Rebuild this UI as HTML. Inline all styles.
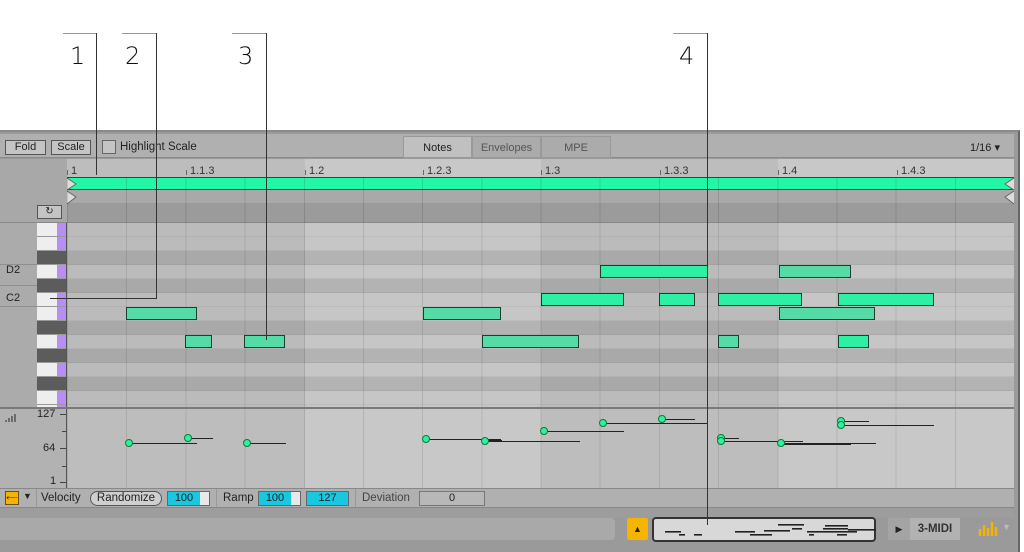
<!DOCTYPE html>
<html><head><meta charset="utf-8"><style>
*{margin:0;padding:0;box-sizing:border-box}
body{width:1024px;height:552px;background:#fff;position:relative;overflow:hidden;font-family:"Liberation Sans",sans-serif;font-size:11px;color:#222}
.a{position:absolute}
.ln{position:absolute;background:#333}
.num{position:absolute;font-size:24px;color:#111;font-family:"DejaVu Sans","Liberation Sans",sans-serif;font-weight:300}
.btn{position:absolute;border:1px solid #555;background:#c4c4c4;font-size:11px;text-align:center;line-height:13px}
.n{position:absolute;height:13px;background:#2ef0a5;border:1px solid #1a3f30}
.nm{background:#55dca6}
.dot{position:absolute;width:8px;height:8px;border-radius:50%;background:#2ef0a5;border:1px solid #173;margin:-4px 0 0 -4px}
.st{position:absolute;height:1px;background:#222}
.rl{position:absolute;top:165px;font-size:11px;color:#333}
.tk{position:absolute;top:170px;width:1px;height:5px;background:#666}
</style></head><body>
<div class="num" style="left:70px;top:42px">1</div>
<div class="num" style="left:125px;top:42px">2</div>
<div class="num" style="left:238px;top:42px">3</div>
<div class="num" style="left:679px;top:42px">4</div>

<div class="a" style="left:0;top:130px;width:1020px;height:422px;background:#9a9a9a;border-right:2px solid #666;border-top:2px solid #8a8a8a"></div>
<div class="a" style="left:0;top:134px;width:1014px;height:24px;background:#b0b0b0;border-bottom:1px solid #8a8a8a"></div>
<div class="btn" style="left:5px;top:140px;width:41px">Fold</div>
<div class="btn" style="left:51px;top:140px;width:40px">Scale</div>
<div class="a" style="left:96px;top:138px;width:1px;height:18px;background:#888"></div>
<div class="a" style="left:102px;top:140px;width:14px;height:14px;border:1px solid #666;background:#c4c4c4"></div>
<div class="a" style="left:120px;top:141px;font-size:11.5px">Highlight Scale</div>
<div class="a" style="left:403px;top:136px;width:69px;height:22px;background:#c0c0c0;border:1px solid #999;text-align:center;line-height:22px">Notes</div>
<div class="a" style="left:472px;top:136px;width:69px;height:22px;background:#ababab;border:1px solid #999;text-align:center;line-height:22px;color:#555">Envelopes</div>
<div class="a" style="left:541px;top:136px;width:70px;height:22px;background:#ababab;border:1px solid #999;text-align:center;line-height:22px;color:#555">MPE</div>
<div class="a" style="left:970px;top:141px;font-size:11px">1/16 ▾</div>

<div class="a" style="left:0;top:159px;width:67px;height:64px;background:#a8a8a8;border-bottom:1px solid #888"></div>
<div class="btn" style="left:37px;top:205px;width:25px;height:14px;font-size:10px;line-height:12px">↻</div>
<div class="a" style="left:67px;top:159px;width:238px;height:18px;background:#bdbdbd"></div>
<div class="a" style="left:305px;top:159px;width:236px;height:18px;background:#c8c8c8"></div>
<div class="a" style="left:541px;top:159px;width:237px;height:18px;background:#bdbdbd"></div>
<div class="a" style="left:778px;top:159px;width:236px;height:18px;background:#c8c8c8"></div>
<div class="rl" style="left:71px">1</div><div class="tk" style="left:67px"></div>
<div class="rl" style="left:190px">1.1.3</div><div class="tk" style="left:186px"></div>
<div class="rl" style="left:309px">1.2</div><div class="tk" style="left:305px"></div>
<div class="rl" style="left:427px">1.2.3</div><div class="tk" style="left:423px"></div>
<div class="rl" style="left:545px">1.3</div><div class="tk" style="left:541px"></div>
<div class="rl" style="left:664px">1.3.3</div><div class="tk" style="left:660px"></div>
<div class="rl" style="left:782px">1.4</div><div class="tk" style="left:778px"></div>
<div class="rl" style="left:901px">1.4.3</div><div class="tk" style="left:897px"></div>
<div class="a" style="left:67px;top:177px;width:947px;height:13px;background:#22f7a5;border:1px solid #2a4a3a"></div>
<div class="a" style="left:67px;top:190px;width:947px;height:14px;background:#a9a9a9;border-bottom:1px solid #999"></div>
<div class="a" style="left:67px;top:204px;width:947px;height:19px;background:#9b9b9b;border-bottom:1px solid #888"></div>
<svg class="a" style="left:66px;top:177px" width="12" height="28"><path d="M1 1 L10 7 L1 13 M1 14 L10 20 L1 27" fill="#ddd" stroke="#666"/></svg>
<svg class="a" style="left:1003px;top:177px" width="12" height="28"><path d="M11 1 L2 7 L11 13 M11 14 L2 20 L11 27" fill="#ddd" stroke="#666"/></svg>
<div class="a" style="left:67px;top:177px;width:947px;height:46px;background:repeating-linear-gradient(90deg,rgba(0,0,0,.12) 0 1px,transparent 1px 59.19px);"></div>

<div class="a" style="left:0;top:223px;width:37px;height:185px;background:#ababab"></div>
<div class="a" style="left:0;top:264px;width:37px;height:1px;background:#8f8f8f"></div>
<div class="a" style="left:0;top:285px;width:37px;height:1px;background:#8f8f8f"></div>
<div class="a" style="left:0;top:306px;width:37px;height:1px;background:#8f8f8f"></div>
<div class="a" style="left:6px;top:264px;font-size:11px">D2</div>
<div class="a" style="left:6px;top:292px;font-size:11px">C2</div>
<div class="a" style="left:37px;top:223px;width:30px;height:185px;background:#eee"></div>
<div class="a" style="left:57px;top:223px;width:9px;height:185px;background:#b68ef5"></div>
<div class="a" style="left:66px;top:223px;width:1px;height:185px;background:#555"></div>
<div class="a" style="left:67px;top:223px;width:947px;height:185px;background:#c6c6c6"></div>
<div class="a" style="left:67px;top:251px;width:947px;height:14px;background:#b3b3b3"></div>
<div class="a" style="left:67px;top:279px;width:947px;height:14px;background:#b3b3b3"></div>
<div class="a" style="left:67px;top:321px;width:947px;height:14px;background:#b3b3b3"></div>
<div class="a" style="left:67px;top:349px;width:947px;height:14px;background:#b3b3b3"></div>
<div class="a" style="left:67px;top:377px;width:947px;height:14px;background:#b3b3b3"></div>
<div class="a" style="left:37px;top:251px;width:29px;height:13px;background:#5c5c5c"></div>
<div class="a" style="left:37px;top:279px;width:29px;height:13px;background:#5c5c5c"></div>
<div class="a" style="left:37px;top:321px;width:29px;height:13px;background:#5c5c5c"></div>
<div class="a" style="left:37px;top:349px;width:29px;height:13px;background:#5c5c5c"></div>
<div class="a" style="left:37px;top:377px;width:29px;height:13px;background:#5c5c5c"></div>
<div class="a" style="left:37px;top:223px;width:29px;height:185px;background:repeating-linear-gradient(180deg,transparent 0 13px,#999 13px 14px)"></div>
<div class="a" style="left:67px;top:223px;width:947px;height:185px;background:repeating-linear-gradient(180deg,transparent 0 13px,rgba(0,0,0,.05) 13px 14px)"></div>
<div class="a" style="left:67px;top:223px;width:238px;height:185px;background:rgba(0,0,0,.05)"></div>
<div class="a" style="left:541px;top:223px;width:237px;height:185px;background:rgba(0,0,0,.05)"></div>
<div class="a" style="left:67px;top:223px;width:947px;height:185px;background:repeating-linear-gradient(90deg,rgba(0,0,0,.1) 0 1px,transparent 1px 59.19px)"></div>

<div class="n" style="left:600px;top:265px;width:108px"></div>
<div class="n nm" style="left:779px;top:265px;width:72px"></div>
<div class="n" style="left:541px;top:293px;width:83px"></div>
<div class="n" style="left:659px;top:293px;width:36px"></div>
<div class="n" style="left:718px;top:293px;width:84px"></div>
<div class="n" style="left:838px;top:293px;width:96px"></div>
<div class="n nm" style="left:126px;top:307px;width:71px"></div>
<div class="n nm" style="left:423px;top:307px;width:78px"></div>
<div class="n nm" style="left:779px;top:307px;width:96px"></div>
<div class="n nm" style="left:185px;top:335px;width:27px"></div>
<div class="n nm" style="left:244px;top:335px;width:41px"></div>
<div class="n nm" style="left:482px;top:335px;width:97px"></div>
<div class="n nm" style="left:718px;top:335px;width:21px"></div>
<div class="n" style="left:838px;top:335px;width:31px"></div>

<div class="a" style="left:0;top:407px;width:1014px;height:2px;background:#7a7a7a"></div>
<div class="a" style="left:0;top:409px;width:67px;height:80px;background:#b2b2b2"></div>
<div class="a" style="left:67px;top:409px;width:947px;height:80px;background:#c8c8c8"></div>
<div class="a" style="left:67px;top:409px;width:238px;height:80px;background:#bdbdbd"></div>
<div class="a" style="left:541px;top:409px;width:237px;height:80px;background:#bdbdbd"></div>
<div class="a" style="left:67px;top:409px;width:947px;height:80px;background:repeating-linear-gradient(90deg,rgba(0,0,0,.1) 0 1px,transparent 1px 59.19px)"></div>
<div class="a" style="left:66px;top:409px;width:1px;height:80px;background:#555"></div>
<div class="a" style="left:37px;top:408px;font-size:11px">127</div>
<div class="a" style="left:43px;top:442px;font-size:11px">64</div>
<div class="a" style="left:50px;top:475px;font-size:11px">1</div>
<div class="a" style="left:60px;top:414px;width:6px;height:1px;background:#444"></div>
<div class="a" style="left:62px;top:431px;width:4px;height:1px;background:#444"></div>
<div class="a" style="left:60px;top:448px;width:6px;height:1px;background:#444"></div>
<div class="a" style="left:62px;top:466px;width:4px;height:1px;background:#444"></div>
<div class="a" style="left:60px;top:482px;width:6px;height:1px;background:#444"></div>
<svg class="a" style="left:5px;top:413px" width="12" height="10"><path d="M1 9V7M4 9V5M7 9V3M10 9V1" stroke="#555" stroke-width="1.5"/></svg>

<div class="st" style="left:129px;top:443px;width:68px"></div>
<div class="st" style="left:188px;top:438px;width:25px"></div>
<div class="st" style="left:247px;top:443px;width:39px"></div>
<div class="st" style="left:426px;top:439px;width:75px"></div>
<div class="st" style="left:485px;top:441px;width:95px"></div>
<div class="st" style="left:485px;top:440px;width:17px;height:2px"></div>
<div class="st" style="left:544px;top:431px;width:80px"></div>
<div class="st" style="left:603px;top:423px;width:105px"></div>
<div class="st" style="left:662px;top:419px;width:33px"></div>
<div class="st" style="left:721px;top:438px;width:18px"></div>
<div class="st" style="left:721px;top:441px;width:81px"></div>
<div class="st" style="left:781px;top:443px;width:70px;height:2px"></div>
<div class="st" style="left:781px;top:441px;width:22px"></div>
<div class="st" style="left:841px;top:421px;width:28px"></div>
<div class="st" style="left:841px;top:425px;width:93px"></div>
<div class="st" style="left:841px;top:443px;width:35px"></div>
<div class="dot" style="left:129px;top:443px"></div>
<div class="dot" style="left:188px;top:438px"></div>
<div class="dot" style="left:247px;top:443px"></div>
<div class="dot" style="left:426px;top:439px"></div>
<div class="dot" style="left:485px;top:441px"></div>
<div class="dot" style="left:544px;top:431px"></div>
<div class="dot" style="left:603px;top:423px"></div>
<div class="dot" style="left:662px;top:419px"></div>
<div class="dot" style="left:721px;top:438px"></div>
<div class="dot" style="left:721px;top:441px"></div>
<div class="dot" style="left:781px;top:443px"></div>
<div class="dot" style="left:841px;top:421px"></div>
<div class="dot" style="left:841px;top:425px"></div>

<div class="a" style="left:0;top:488px;width:1014px;height:20px;background:#b0b0b0;border-top:1px solid #888;border-bottom:1px solid #888"></div>
<div class="a" style="left:5px;top:491px;width:14px;height:14px;background:#f5b400;border:1px solid #6a5200;font-size:8px;text-align:center;line-height:12px">⟵</div>
<div class="a" style="left:23px;top:491px;font-size:9px">▼</div>
<div class="a" style="left:36px;top:489px;width:1px;height:18px;background:#999"></div>
<div class="a" style="left:41px;top:492px;font-size:11.5px">Velocity</div>
<div class="a" style="left:90px;top:491px;width:72px;height:15px;border:1px solid #555;border-radius:8px;background:#cfcfcf;text-align:center;font-size:11.5px;line-height:13px">Randomize</div>
<div class="a" style="left:167px;top:491px;width:43px;height:15px;background:#e8e8e8;border:1px solid #666"></div>
<div class="a" style="left:168px;top:492px;width:32px;height:13px;background:#18c8e0;text-align:center;line-height:13px;font-size:11px">100</div>
<div class="a" style="left:216px;top:489px;width:1px;height:18px;background:#999"></div>
<div class="a" style="left:223px;top:492px;font-size:11.5px">Ramp</div>
<div class="a" style="left:258px;top:491px;width:43px;height:15px;background:#e8e8e8;border:1px solid #666"></div>
<div class="a" style="left:259px;top:492px;width:32px;height:13px;background:#18c8e0;text-align:center;line-height:13px;font-size:11px">100</div>
<div class="a" style="left:306px;top:491px;width:43px;height:15px;background:#18c8e0;border:1px solid #666;text-align:center;line-height:13px;font-size:11px">127</div>
<div class="a" style="left:355px;top:489px;width:1px;height:18px;background:#999"></div>
<div class="a" style="left:362px;top:492px;font-size:11.5px;color:#444">Deviation</div>
<div class="a" style="left:419px;top:491px;width:66px;height:15px;background:#b8b8b8;border:1px solid #777;text-align:center;line-height:13px;font-size:11px">0</div>

<div class="a" style="left:0;top:508px;width:1014px;height:10px;background:#9d9d9d"></div>
<div class="a" style="left:0;top:518px;width:615px;height:22px;background:#a9a9a9;border-radius:0 4px 4px 0"></div>
<div class="a" style="left:627px;top:518px;width:21px;height:22px;background:#f5b400;border-radius:2px;text-align:center;line-height:22px;font-size:9px">▲</div>
<div class="a" style="left:652px;top:517px;width:224px;height:25px;background:#d8d8d8;border:2px solid #333;border-radius:4px"></div>
<svg class="a" style="left:652px;top:517px" width="224" height="25"><g fill="#222">
<rect x="13" y="14" width="16" height="1.6"/><rect x="27" y="17" width="6" height="1.6"/><rect x="42" y="17" width="8" height="1.6"/>
<rect x="83" y="14" width="20" height="1.6"/><rect x="98" y="17" width="22" height="1.6"/><rect x="112" y="13" width="26" height="1.6"/>
<rect x="126" y="7" width="26" height="1.6"/><rect x="140" y="11" width="10" height="1.6"/><rect x="155" y="14" width="30" height="1.6"/>
<rect x="171" y="11" width="25" height="1.6"/><rect x="196" y="12" width="30" height="1.6"/><rect x="157" y="17" width="5" height="1.6"/>
<rect x="173" y="8" width="23" height="1.6"/><rect x="185" y="17" width="10" height="1.6"/><rect x="185" y="14" width="20" height="1.6"/></g></svg>
<div class="a" style="left:888px;top:518px;width:22px;height:22px;background:#a4a4a4;text-align:center;line-height:22px;font-size:9px">▶</div>
<div class="a" style="left:910px;top:518px;width:50px;height:22px;background:#b2b2b2;text-align:center;line-height:22px;font-size:11.5px;font-weight:bold;color:#333">3-MIDI</div>
<svg class="a" style="left:978px;top:521px" width="20" height="16"><path d="M2 15V8M6 15V4M10 15V7M14 15V1M18 15V6" stroke="#f5b400" stroke-width="2.4"/></svg>
<div class="a" style="left:1002px;top:522px;font-size:9px;color:#bbb">▼</div>

<div class="ln" style="left:63px;top:33px;width:33px;height:1px;background:#999"></div>
<div class="ln" style="left:96px;top:33px;width:1px;height:142px"></div>
<div class="ln" style="left:122px;top:33px;width:34px;height:1px;background:#999"></div>
<div class="ln" style="left:156px;top:33px;width:1px;height:265px"></div>
<div class="ln" style="left:50px;top:298px;width:107px;height:1px"></div>
<div class="ln" style="left:232px;top:33px;width:34px;height:1px;background:#999"></div>
<div class="ln" style="left:266px;top:33px;width:1px;height:307px"></div>
<div class="ln" style="left:673px;top:33px;width:34px;height:1px;background:#999"></div>
<div class="ln" style="left:707px;top:33px;width:1px;height:492px"></div>
</body></html>
